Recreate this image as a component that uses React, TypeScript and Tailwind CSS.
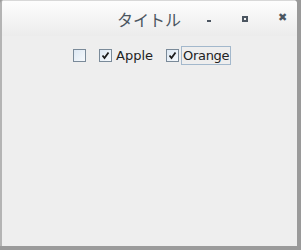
import React from 'react';

function Box({ checked }: { checked?: boolean }) {
  return (
    <span className="w-[13px] h-[13px] border border-[#7a8a99] bg-gradient-to-br from-[#dde8f3] to-[#f6f9fc] flex items-center justify-center">
      {checked && (
        <svg width="9" height="9" viewBox="0 0 9 9">
          <path d="M1.5 4.5 L3.5 7 L7.5 1.5" stroke="#1c1c1c" strokeWidth="1.8" fill="none" />
        </svg>
      )}
    </span>
  );
}

export default function App() {
  return (
    <div className="w-[301px] h-[250px] bg-[#9a9a9a] font-['DejaVu_Sans',sans-serif]">
      <div className="w-[297px] h-[246px] flex flex-col rounded-tl-[4px] rounded-tr-[4px] border-l-2 border-[#b4b4b4] bg-[#eeeeee] overflow-hidden">
        {/* title bar */}
        <div className="h-[36px] flex items-center pl-[115px] bg-gradient-to-b from-[#fdfdfd] to-[#ececec] border-t border-[#d8d8d8]">
          <span className="w-[64px] text-[16px] text-[#4c5661] font-['Noto_Sans_CJK_JP',sans-serif]">タイトル</span>
          <span className="w-[4px] h-[2px] bg-[#4c5661] mt-[4px] ml-[26px]" />
          <span className="w-[6px] h-[6px] border-2 border-[#4c5661] ml-[31px]" />
          <span className="text-[11px] font-bold text-[#4c5661] ml-[30px]">✖</span>
        </div>
        {/* content */}
        <div className="flex items-center pl-[71px] pt-[10px] text-[13px] text-[#222222]">
          <Box />
          <span className="w-[13px]" />
          <Box checked />
          <span className="ml-[4px] mr-[13px]">Apple</span>
          <Box checked />
          <span className="ml-[2px] px-[1px] border border-[#a3b8cc] leading-[17px] tracking-[-0.3px]">Orange</span>
        </div>
      </div>
    </div>
  );
}
